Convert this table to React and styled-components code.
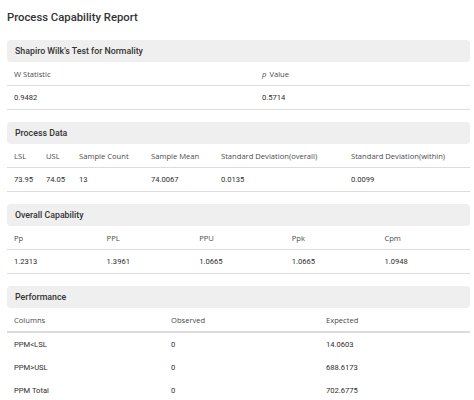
import React from "react";
import styled, { createGlobalStyle } from "styled-components";

const Global = createGlobalStyle`
  html, body { margin: 0; padding: 0; background: #fff; }
  body { font-family: Roboto, "Open Sans", Arial, sans-serif; color: #333; }
`;

const Page = styled.div`
  padding: 8px 4px 0 7px;
`;

const Title = styled.h1`
  margin: 0 0 12px 0;
  font-size: 11.3px;
  line-height: 20px;
  font-weight: 500;
  color: #333;
`;

const Section = styled.section`
  margin-bottom: 12px;
`;

const SectionHeader = styled.div`
  height: 22px;
  display: flex;
  align-items: center;
  padding-left: 8px;
  background: #efefef;
  border-radius: 4px;
  font-size: 8.8px;
  font-weight: 500;
  color: #333;
`;

const Row = styled.div`
  display: grid;
  grid-template-columns: ${(p) => p.$cols};
  height: 23px;
  align-items: center;
  border-bottom: ${(p) => (p.$line ? `${p.$line}px solid #dcdcdc` : "none")};
`;

const Cell = styled.div`
  padding-left: 7px;
  font-size: 7.6px;
  color: ${(p) => (p.$head ? "#4a4a4a" : "#2e2e2e")};
  font-family: ${(p) => (p.$head ? '"Open Sans", Roboto, sans-serif' : "Roboto, sans-serif")};
  font-weight: ${(p) => (p.$head ? 500 : 400)};
  white-space: nowrap;
`;

const Italic = styled.i`
  font-style: italic;
  margin-right: 3px;
`;

const sections = [
  {
    title: "Shapiro Wilk's Test for Normality",
    cols: "248px 1fr",
    head: ["W Statistic", "p Value"],
    rows: [["0.9482", "0.5714"]],
    headLine: 1,
    rowLine: 1,
  },
  {
    title: "Process Data",
    cols: "32px 33px 72px 70px 130px 1fr",
    head: ["LSL", "USL", "Sample Count", "Sample Mean", "Standard Deviation(overall)", "Standard Deviation(within)"],
    rows: [["73.95", "74.05", "13", "74.0067", "0.0135", "0.0099"]],
    headLine: 1,
    rowLine: 1,
  },
  {
    title: "Overall Capability",
    cols: "repeat(5, 1fr)",
    head: ["Pp", "PPL", "PPU", "Ppk", "Cpm"],
    rows: [["1.2313", "1.3961", "1.0665", "1.0665", "1.0948"]],
    headLine: 1,
    rowLine: 1,
  },
  {
    title: "Performance",
    cols: "157px 155px 1fr",
    head: ["Columns", "Observed", "Expected"],
    rows: [
      ["PPM<LSL", "0", "14.0603"],
      ["PPM>USL", "0", "688.6173"],
      ["PPM Total", "0", "702.6775"],
    ],
    headLine: 2,
    rowLine: 0,
  },
];

export default function App() {
  return (
    <Page>
      <Global />
      <Title>Process Capability Report</Title>
      {sections.map((s) => (
        <Section key={s.title}>
          <SectionHeader>{s.title}</SectionHeader>
          <Row $cols={s.cols} $line={s.headLine}>
            {s.head.map((h) => (
              <Cell $head key={h}>
                {h === "p Value" ? (
                  <>
                    <Italic>p</Italic>Value
                  </>
                ) : (
                  h
                )}
              </Cell>
            ))}
          </Row>
          {s.rows.map((r, i) => (
            <Row $cols={s.cols} $line={s.rowLine} key={i}>
              {r.map((c, j) => (
                <Cell key={j}>{c}</Cell>
              ))}
            </Row>
          ))}
        </Section>
      ))}
    </Page>
  );
}
